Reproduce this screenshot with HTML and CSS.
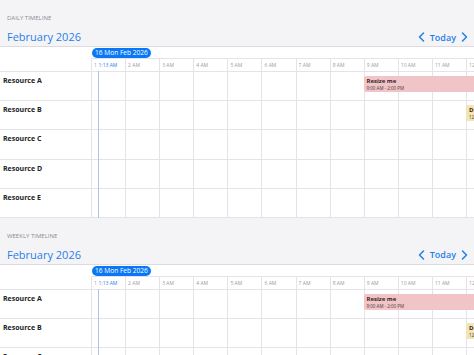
FILE: index.html
```html
<!DOCTYPE html>
<html lang="en">
<head>
    <meta charset="UTF-8">
    <meta name="viewport" content="width=device-width, initial-scale=1.0">
    <title>Timeline</title>
    <link rel="stylesheet" href="styles.css">
</head>
<body>

<section class="timeline">
    <div class="section-title">DAILY TIMELINE</div>
    <div class="tl-header">
        <span class="month">February 2026</span>
        <div class="nav">
            <svg class="chev" width="7" height="10" viewBox="0 0 7 10"><polyline points="5.5,1 1.5,5 5.5,9"/></svg>
            <span class="today">Today</span>
            <svg class="chev" width="7" height="10" viewBox="0 0 7 10"><polyline points="1.5,1 5.5,5 1.5,9"/></svg>
        </div>
    </div>
    <div class="tl-body">
        <div class="res-col">
            <div class="res-spacer"></div>
            <div class="res">Resource A</div>
            <div class="res">Resource B</div>
            <div class="res">Resource C</div>
            <div class="res">Resource D</div>
            <div class="res">Resource E</div>
        </div>
        <div class="grid">
            <div class="day-row"><span class="day-pill">16 Mon Feb 2026</span></div>
            <div class="hours">
                <div class="hour">1 AM</div><div class="hour">2 AM</div><div class="hour">3 AM</div>
                <div class="hour">4 AM</div><div class="hour">5 AM</div><div class="hour">6 AM</div>
                <div class="hour">7 AM</div><div class="hour">8 AM</div><div class="hour">9 AM</div>
                <div class="hour">10 AM</div><div class="hour">11 AM</div><div class="hour">12 PM</div>
            </div>
            <div class="row"><div class="cell"></div><div class="cell"></div><div class="cell"></div><div class="cell"></div><div class="cell"></div><div class="cell"></div><div class="cell"></div><div class="cell"></div><div class="cell"></div><div class="cell"></div><div class="cell"></div><div class="cell"></div></div>
            <div class="row"><div class="cell"></div><div class="cell"></div><div class="cell"></div><div class="cell"></div><div class="cell"></div><div class="cell"></div><div class="cell"></div><div class="cell"></div><div class="cell"></div><div class="cell"></div><div class="cell"></div><div class="cell"></div></div>
            <div class="row"><div class="cell"></div><div class="cell"></div><div class="cell"></div><div class="cell"></div><div class="cell"></div><div class="cell"></div><div class="cell"></div><div class="cell"></div><div class="cell"></div><div class="cell"></div><div class="cell"></div><div class="cell"></div></div>
            <div class="row"><div class="cell"></div><div class="cell"></div><div class="cell"></div><div class="cell"></div><div class="cell"></div><div class="cell"></div><div class="cell"></div><div class="cell"></div><div class="cell"></div><div class="cell"></div><div class="cell"></div><div class="cell"></div></div>
            <div class="row"><div class="cell"></div><div class="cell"></div><div class="cell"></div><div class="cell"></div><div class="cell"></div><div class="cell"></div><div class="cell"></div><div class="cell"></div><div class="cell"></div><div class="cell"></div><div class="cell"></div><div class="cell"></div></div>

            <div class="now-line"></div>
            <div class="now-label">1:13 AM</div>
            <div class="event event-red ev-a">
                <div class="ev-title">Resize me</div>
                <div class="ev-time">9:00 AM - 2:00 PM</div>
            </div>
            <div class="event event-yellow ev-b">
                <div class="ev-title">Drag me</div>
                <div class="ev-time">12:00 PM - 4:00 PM</div>
            </div>
        </div>
    </div>
</section>

<section class="timeline">
    <div class="section-title">WEEKLY TIMELINE</div>
    <div class="tl-header">
        <span class="month">February 2026</span>
        <div class="nav">
            <svg class="chev" width="7" height="10" viewBox="0 0 7 10"><polyline points="5.5,1 1.5,5 5.5,9"/></svg>
            <span class="today">Today</span>
            <svg class="chev" width="7" height="10" viewBox="0 0 7 10"><polyline points="1.5,1 5.5,5 1.5,9"/></svg>
        </div>
    </div>
    <div class="tl-body">
        <div class="res-col">
            <div class="res-spacer"></div>
            <div class="res">Resource A</div>
            <div class="res">Resource B</div>
            <div class="res">Resource C</div>
        </div>
        <div class="grid">
            <div class="day-row"><span class="day-pill">16 Mon Feb 2026</span></div>
            <div class="hours">
                <div class="hour">1 AM</div><div class="hour">2 AM</div><div class="hour">3 AM</div>
                <div class="hour">4 AM</div><div class="hour">5 AM</div><div class="hour">6 AM</div>
                <div class="hour">7 AM</div><div class="hour">8 AM</div><div class="hour">9 AM</div>
                <div class="hour">10 AM</div><div class="hour">11 AM</div><div class="hour">12 PM</div>
            </div>
            <div class="row"><div class="cell"></div><div class="cell"></div><div class="cell"></div><div class="cell"></div><div class="cell"></div><div class="cell"></div><div class="cell"></div><div class="cell"></div><div class="cell"></div><div class="cell"></div><div class="cell"></div><div class="cell"></div></div>
            <div class="row"><div class="cell"></div><div class="cell"></div><div class="cell"></div><div class="cell"></div><div class="cell"></div><div class="cell"></div><div class="cell"></div><div class="cell"></div><div class="cell"></div><div class="cell"></div><div class="cell"></div><div class="cell"></div></div>
            <div class="row"><div class="cell"></div><div class="cell"></div><div class="cell"></div><div class="cell"></div><div class="cell"></div><div class="cell"></div><div class="cell"></div><div class="cell"></div><div class="cell"></div><div class="cell"></div><div class="cell"></div><div class="cell"></div></div>

            <div class="now-line"></div>
            <div class="now-label">1:13 AM</div>
            <div class="event event-red ev-a">
                <div class="ev-title">Resize me</div>
                <div class="ev-time">9:00 AM - 2:00 PM</div>
            </div>
            <div class="event event-yellow ev-b">
                <div class="ev-title">Drag me</div>
                <div class="ev-time">12:00 PM - 4:00 PM</div>
            </div>
        </div>
    </div>
</section>

</body>
</html>
```

FILE: styles.css
```css
/* Page */
html, body {
    overflow: hidden;
}

body {
    margin: 0;
    background: #f4f4f7;
    font-family: 'Open Sans', 'Liberation Sans', sans-serif;
    color: #222;
}

/* Section heading + calendar header */
.section-title {
    height: 28px;
    box-sizing: border-box;
    padding: 14px 7px 0;
    font-size: 6px;
    line-height: 8px;
    color: #8a8a90;
}

.tl-header {
    height: 18px;
    display: flex;
    align-items: center;
    justify-content: space-between;
    padding: 0 6px 0 7px;
    border-bottom: 1px solid #dcdce0;
}

.month {
    font-size: 11px;
    color: #1f7fe8;
    line-height: 18px;
}

.nav {
    display: flex;
    align-items: center;
    gap: 5px;
}

.today {
    font-size: 9px;
    font-weight: 600;
    color: #1f7fe8;
}

.chev polyline {
    fill: none;
    stroke: #1f7fe8;
    stroke-width: 1.5;
    stroke-linecap: round;
    stroke-linejoin: round;
}

/* Timeline body */
.tl-body {
    display: flex;
    background: #fff;
}

.res-col {
    flex: 0 0 91px;
}

.res-spacer {
    height: 24px;
    border-bottom: 1px solid #e4e4e8;
}

.res {
    height: 28.2px;
    box-sizing: content-box;
    border-bottom: 1px solid #e4e4e8;
    padding: 0 3px;
    font-size: 7px;
    font-weight: 700;
    line-height: 17px;
}

.grid {
    flex: 1;
    position: relative;
    overflow: hidden;
}

.day-row {
    height: 11px;
    display: flex;
    align-items: flex-start;
    border-bottom: 1px solid #e4e4e8;
    padding-left: 1px;
}

.day-pill {
    margin-top: 1px;
    height: 10px;
    padding: 0 3px;
    border-radius: 5px;
    background: #0a78f5;
    color: #fff;
    font-size: 6.6px;
    line-height: 10px;
    white-space: nowrap;
}

.hours,
.row {
    display: flex;
    border-bottom: 1px solid #e4e4e8;
}

.hours {
    height: 12px;
}

.row {
    height: 28.2px;
}

.hour,
.cell {
    flex: 0 0 34.1px;
    box-sizing: border-box;
    border-left: 1px solid #e4e4e8;
}

.hour {
    font-size: 5px;
    line-height: 12px;
    color: #9a9aa0;
    padding-left: 2px;
    white-space: nowrap;
}

/* Current time marker */
.now-line {
    position: absolute;
    left: 6.5px;
    top: 24px;
    bottom: 0;
    width: 1.5px;
    background: #a8c8ef;
}

.now-label {
    position: absolute;
    left: 6px;
    top: 12px;
    height: 12px;
    padding: 0 2px 0 1.5px;
    background: #fff;
    font-size: 5px;
    line-height: 12px;
    color: #2a7fe6;
}

/* Events */
.event {
    position: absolute;
    height: 16px;
    box-sizing: border-box;
    padding: 2px 3px;
    border-radius: 2px;
    white-space: nowrap;
    overflow: hidden;
}

.event-red {
    background: #f1c5c8;
}

.event-yellow {
    background: #f3e4b6;
}

.ev-a {
    left: 272.5px;
    top: 28.7px;
    width: 200px;
}

.ev-b {
    left: 375px;
    top: 57.9px;
    width: 150px;
}

.ev-title {
    font-size: 6px;
    font-weight: 700;
    line-height: 7px;
    color: #3a2525;
}

.ev-time {
    font-size: 4.5px;
    line-height: 6px;
    color: #4a3535;
}
```
